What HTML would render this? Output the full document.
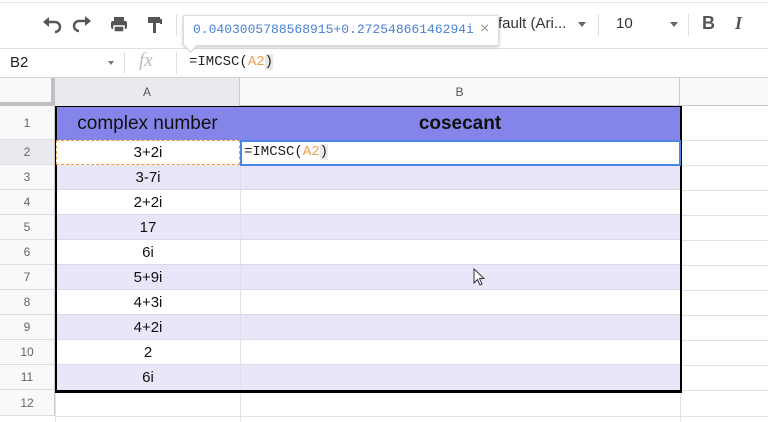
<!DOCTYPE html>
<html><head><style>
*{margin:0;padding:0;box-sizing:border-box}
body{width:768px;height:422px;overflow:hidden;background:#fff;font-family:"Liberation Sans",Arial,sans-serif;position:relative}
.abs{position:absolute}
.hl{position:absolute;height:1px;background:#e2e2e2}
.vl{position:absolute;width:1px;background:#e2e2e2}
.rn{position:absolute;left:0;width:55px;text-align:center;font-size:12px;color:#666;background:#f8f9fa;border-bottom:1px solid #ddd;border-right:1px solid #ccc}
.ra{position:absolute;left:56px;width:184px;text-align:center;font-size:15px;color:#111}
</style></head><body>
<!-- toolbar -->
<div class="hl" style="top:2px;left:0;width:768px;background:#e8e8e8"></div>
<div class="hl" style="top:48px;left:0;width:768px;background:#e0e0e0"></div>
<svg class="abs" style="left:40px;top:14px" width="130" height="22" viewBox="0 0 130 22">
<path d="M6 9 h9 a5 5 0 0 1 0 10" fill="none" stroke="#555" stroke-width="2.4" transform="translate(0,-1)"/>
<path d="M3 8 l6 -5 v10z" fill="#555"/>
<path d="M48 8 h-9 a5 5 0 0 0 0 10" fill="none" stroke="#555" stroke-width="2.4" transform="translate(0,-1)"/>
<path d="M51 7 l-6 -5 v10z" fill="#555"/>
<rect x="74" y="3" width="10" height="4" fill="#555"/><rect x="71" y="7" width="16" height="8" rx="2" fill="#555"/><rect x="74" y="12" width="10" height="6" fill="#555" stroke="#fff" stroke-width="1.5"/>
<rect x="108" y="3" width="12" height="6" fill="#555"/><rect x="120" y="5" width="2" height="5" fill="#555"/><rect x="113" y="9" width="3" height="10" fill="#555"/>
</svg>
<div class="vl" style="left:176px;top:14px;height:22px;background:#ddd"></div>
<div class="vl" style="left:598px;top:14px;height:22px;background:#ddd"></div>
<div class="vl" style="left:688px;top:14px;height:22px;background:#ddd"></div>
<div class="abs" style="left:498px;top:15px;font-size:15px;color:#333">fault (Ari...</div>
<div class="abs" style="left:578px;top:22px;border:4px solid transparent;border-top:5px solid #666"></div>
<div class="abs" style="left:616px;top:15px;font-size:15px;color:#333">10</div>
<div class="abs" style="left:670px;top:22px;border:4px solid transparent;border-top:5px solid #666"></div>
<div class="abs" style="left:702px;top:13px;font-size:18px;font-weight:bold;color:#555">B</div>
<div class="abs" style="left:735px;top:13px;font-size:18px;font-style:italic;color:#555;font-family:'Liberation Serif',serif;font-weight:bold">I</div>
<!-- tooltip -->
<div class="abs" style="left:183px;top:15px;width:316px;height:31px;background:#fff;border:1px solid #ddd;box-shadow:0 1px 3px rgba(0,0,0,.25);border-radius:2px"></div>
<div class="abs" style="left:186px;top:42px;width:9px;height:9px;background:#fff;transform:rotate(45deg);border-right:1px solid #ccc;border-bottom:1px solid #ccc"></div>
<div class="abs" style="left:193px;top:22px;font-family:'Liberation Mono',monospace;font-size:13px;color:#4a7fd8">0.0403005788568915+0.27254866146294i</div>
<div class="abs" style="left:480px;top:20px;font-size:16px;color:#999">×</div>
<!-- formula bar -->
<div class="abs" style="left:10px;top:54px;font-size:15px;color:#222">B2</div>
<div class="abs" style="left:108px;top:61px;border:3.5px solid transparent;border-top:4px solid #777"></div>
<div class="vl" style="left:124px;top:52px;height:22px;background:#ddd"></div>
<div class="abs" style="left:139px;top:50px;font-size:19px;font-style:italic;color:#bbb;font-family:'Liberation Serif',serif">fx</div>
<div class="vl" style="left:176px;top:52px;height:22px;background:#ddd"></div>
<div class="abs" style="left:189px;top:54px;font-family:'Liberation Mono',monospace;font-size:14px;color:#222">=IMCSC(<span style="color:#f29c4b">A2</span><span style="background:#e8e8e8">)</span></div>
<div class="hl" style="top:77px;left:0;width:768px;background:#d0d0d0"></div>
<!-- column headers -->
<div class="abs" style="left:0;top:78px;width:768px;height:28px;background:#f8f9fa;border-bottom:1px solid #c8c8c8"></div>
<div class="abs" style="left:0;top:78px;width:55px;height:28px;border-right:4px solid #c0c0c0;border-bottom:4px solid #c0c0c0"></div>
<div class="abs" style="left:55px;top:78px;width:185px;height:28px;background:#e8eaed;border-right:1px solid #ccc;text-align:center;font-size:12px;color:#555;line-height:28px">A</div>
<div class="abs" style="left:240px;top:78px;width:440px;height:28px;border-right:1px solid #ccc;text-align:center;font-size:12px;color:#555;line-height:28px">B</div>
<div class="vl" style="left:55px;top:106px;height:316px"></div>
<div class="vl" style="left:240px;top:106px;height:316px"></div>
<div class="vl" style="left:680px;top:106px;height:316px"></div>
<!-- rows -->
<div class="rn" style="top:106px;height:34px;line-height:34px">1</div>
<div class="abs" style="left:55px;top:106px;width:625px;height:34px;background:#8585e9"></div>
<div class="abs" style="left:55px;top:106px;width:185px;height:34px;line-height:36px;text-align:center;font-size:19px;color:#111">complex number</div>
<div class="abs" style="left:240px;top:106px;width:440px;height:34px;line-height:36px;text-align:center;font-size:19px;font-weight:bold;color:#111">cosecant</div>
<div class="rn" style="top:140px;height:25px;line-height:25px;background:#e8eaed">2</div>
<div class="rn" style="top:165px;height:25px;line-height:25px">3</div>
<div class="rn" style="top:190px;height:25px;line-height:25px">4</div>
<div class="rn" style="top:215px;height:25px;line-height:25px">5</div>
<div class="rn" style="top:240px;height:25px;line-height:25px">6</div>
<div class="rn" style="top:265px;height:25px;line-height:25px">7</div>
<div class="rn" style="top:290px;height:25px;line-height:25px">8</div>
<div class="rn" style="top:315px;height:25px;line-height:25px">9</div>
<div class="rn" style="top:340px;height:25px;line-height:25px">10</div>
<div class="rn" style="top:365px;height:25px;line-height:25px">11</div>
<div class="rn" style="top:390px;height:26px;line-height:26px">12</div>
<div class="abs" style="left:55px;top:165px;width:625px;height:25px;background:#e8e6f8;border-bottom:1px solid #d8d8e8"></div>
<div class="abs" style="left:55px;top:190px;width:625px;height:25px;border-bottom:1px solid #d8d8e8"></div>
<div class="abs" style="left:55px;top:215px;width:625px;height:25px;background:#e8e6f8;border-bottom:1px solid #d8d8e8"></div>
<div class="abs" style="left:55px;top:240px;width:625px;height:25px;border-bottom:1px solid #d8d8e8"></div>
<div class="abs" style="left:55px;top:265px;width:625px;height:25px;background:#e8e6f8;border-bottom:1px solid #d8d8e8"></div>
<div class="abs" style="left:55px;top:290px;width:625px;height:25px;border-bottom:1px solid #d8d8e8"></div>
<div class="abs" style="left:55px;top:315px;width:625px;height:25px;background:#e8e6f8;border-bottom:1px solid #d8d8e8"></div>
<div class="abs" style="left:55px;top:340px;width:625px;height:25px;border-bottom:1px solid #d8d8e8"></div>
<div class="abs" style="left:55px;top:365px;width:625px;height:25px;background:#e8e6f8"></div>
<div class="vl" style="left:240px;top:165px;height:225px;background:#e0e0ea"></div>
<div class="hl" style="left:680px;top:140px;width:88px"></div>
<div class="hl" style="left:680px;top:165px;width:88px"></div>
<div class="hl" style="left:680px;top:190px;width:88px"></div>
<div class="hl" style="left:680px;top:215px;width:88px"></div>
<div class="hl" style="left:680px;top:240px;width:88px"></div>
<div class="hl" style="left:680px;top:265px;width:88px"></div>
<div class="hl" style="left:680px;top:290px;width:88px"></div>
<div class="hl" style="left:680px;top:315px;width:88px"></div>
<div class="hl" style="left:680px;top:340px;width:88px"></div>
<div class="hl" style="left:680px;top:365px;width:88px"></div>
<div class="hl" style="left:680px;top:390px;width:88px"></div>
<div class="hl" style="left:55px;top:416px;width:713px"></div>
<div class="ra" style="top:140px;line-height:25px">3+2i</div>
<div class="ra" style="top:165px;line-height:25px">3-7i</div>
<div class="ra" style="top:190px;line-height:25px">2+2i</div>
<div class="ra" style="top:215px;line-height:25px">17</div>
<div class="ra" style="top:240px;line-height:25px">6i</div>
<div class="ra" style="top:265px;line-height:25px">5+9i</div>
<div class="ra" style="top:290px;line-height:25px">4+3i</div>
<div class="ra" style="top:315px;line-height:25px">4+2i</div>
<div class="ra" style="top:340px;line-height:25px">2</div>
<div class="ra" style="top:365px;line-height:25px">6i</div>
<!-- outer border -->
<div class="abs" style="left:55px;top:106px;width:627px;height:287px;border:2px solid #000;border-top:1px solid #000;border-bottom:3px solid #000"></div>
<!-- A2 dashed -->
<div class="abs" style="left:56px;top:140px;width:184px;height:25px;border:1.5px dashed #f0993c;background:#fff;text-align:center;line-height:23px;font-size:15px;color:#111">3+2i</div>
<!-- B2 editor -->
<div class="abs" style="left:240px;top:140px;width:441px;height:26px;border:2px solid #4a86e8;background:#fff;font-family:'Liberation Mono',monospace;font-size:14px;color:#222;padding:2px 0 0 2px">=IMCSC(<span style="color:#f29c4b">A2</span><span style="background:#e8e8e8">)</span></div>
<!-- cursor -->
<svg class="abs" style="left:473px;top:268px" width="14" height="20" viewBox="0 0 14 20"><path d="M1 1 L1 15 L4.5 11.5 L7 17 L9 16 L6.5 10.5 L11 10.5 Z" fill="#fff" stroke="#333" stroke-width="1"/></svg>
</body></html>
